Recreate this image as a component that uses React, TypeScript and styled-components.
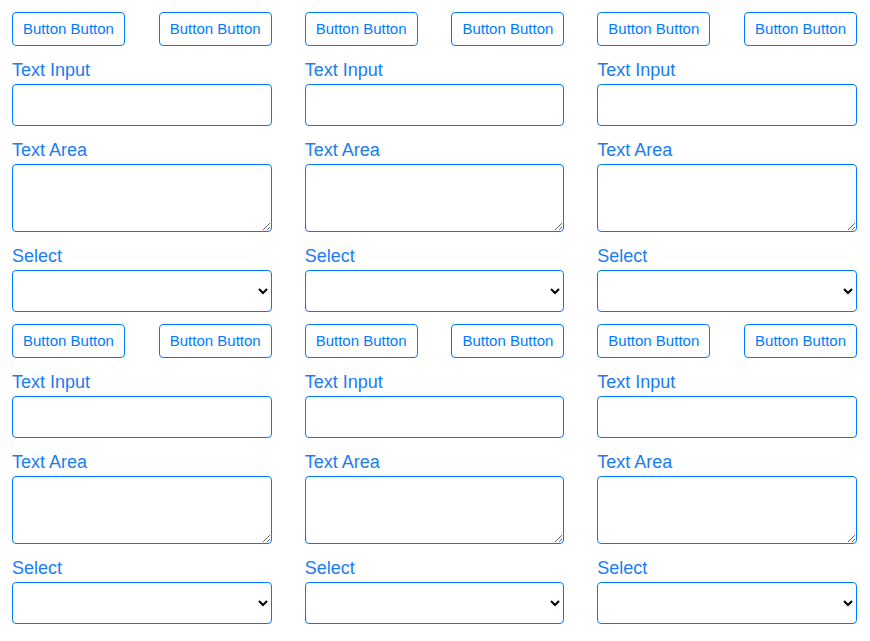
import React from "react";
import styled, { createGlobalStyle } from "styled-components";

const Global = createGlobalStyle`
  html, body { margin: 0; padding: 0; background: #fff; }
  body { font-family: "Liberation Sans", Arial, sans-serif; }
  * { box-sizing: border-box; }
`;

const Page = styled.div`
  display: grid;
  grid-template-columns: repeat(3, 1fr);
  column-gap: 33px;
  row-gap: 12px;
  padding: 12px 13px 12px 12px;
`;

const Card = styled.div`
  display: flex;
  flex-direction: column;
  gap: 12px;
`;

const ButtonRow = styled.div`
  display: flex;
  justify-content: space-between;
`;

const Button = styled.button`
  font-family: "Liberation Sans", Arial, sans-serif;
  font-size: 15px;
  line-height: 18px;
  padding: 7px 10px;
  color: #007bff;
  background: #fff;
  border: 1px solid #007bff;
  border-radius: 4px;
  cursor: pointer;
`;

const Field = styled.div`
  display: flex;
  flex-direction: column;
`;

const Label = styled.label`
  display: block;
  font-size: 18px;
  line-height: 22px;
  color: #1a7cf5;
  padding-top: 1px;
  margin-bottom: 3px;
`;

const Input = styled.input`
  display: block;
  width: 100%;
  height: 42px;
  border: 1px solid #007bff;
  border-radius: 4px;
  background: #fff;
  font-size: 15px;
  padding: 0 8px;
`;

const TextArea = styled.textarea`
  display: block;
  width: 100%;
  height: 68px;
  border: 1px solid #007bff;
  border-radius: 4px;
  background: #fff;
  font-size: 15px;
  padding: 6px 8px;
  margin: 0;
`;

const Select = styled.select`
  display: block;
  width: 100%;
  height: 42px;
  border: 1px solid #007bff;
  border-radius: 4px;
  background: #fff;
  font-size: 15px;
  padding: 0 4px;
`;

function Block() {
  return (
    <Card>
      <ButtonRow>
        <Button>Button Button</Button>
        <Button>Button Button</Button>
      </ButtonRow>
      <Field>
        <Label>Text Input</Label>
        <Input type="text" />
      </Field>
      <Field>
        <Label>Text Area</Label>
        <TextArea />
      </Field>
      <Field>
        <Label>Select</Label>
        <Select>
          <option></option>
        </Select>
      </Field>
    </Card>
  );
}

export default function App() {
  return (
    <>
      <Global />
      <Page>
        {Array.from({ length: 6 }).map((_, i) => (
          <Block key={i} />
        ))}
      </Page>
    </>
  );
}
